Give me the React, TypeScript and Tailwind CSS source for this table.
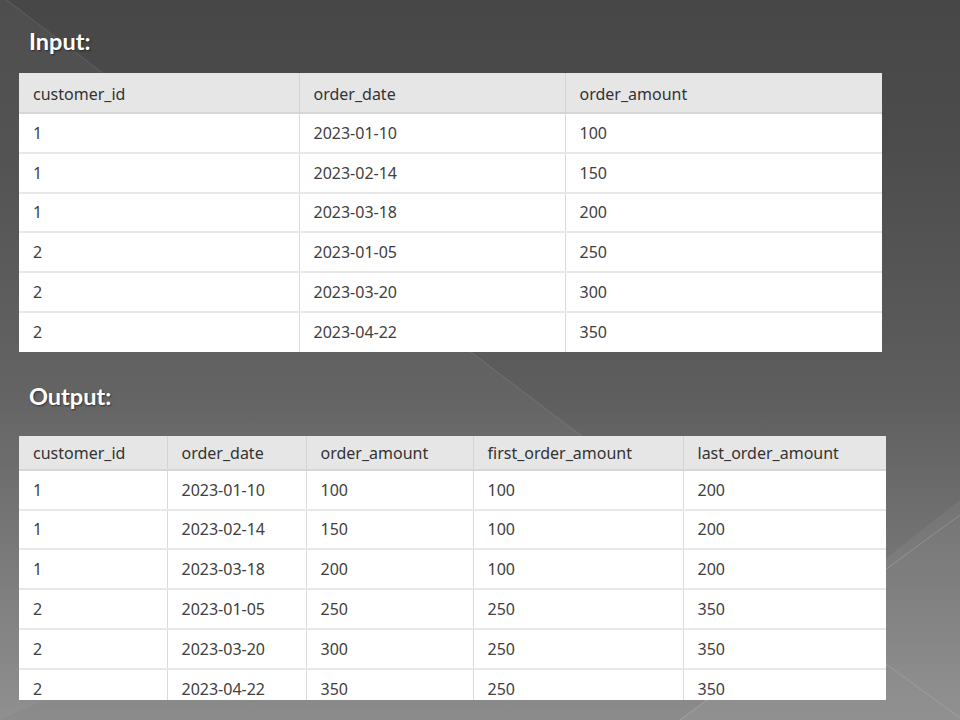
import * as React from "react";

const inputRows = [
  ["1", "2023-01-10", "100"],
  ["1", "2023-02-14", "150"],
  ["1", "2023-03-18", "200"],
  ["2", "2023-01-05", "250"],
  ["2", "2023-03-20", "300"],
  ["2", "2023-04-22", "350"],
];

const outputRows = [
  ["1", "2023-01-10", "100", "100", "200"],
  ["1", "2023-02-14", "150", "100", "200"],
  ["1", "2023-03-18", "200", "100", "200"],
  ["2", "2023-01-05", "250", "250", "350"],
  ["2", "2023-03-20", "300", "250", "350"],
  ["2", "2023-04-22", "350", "250", "350"],
];

function Backdrop() {
  // slide theme decoration: faint diagonal panels and lines
  return (
    <svg className="pointer-events-none absolute inset-0" width="960" height="720" viewBox="0 0 960 720">
      <polygon points="0,-5 600,450 0,720" fill="#ffffff" fillOpacity="0.04" />
      <polygon points="960,500 680,720 960,720" fill="#ffffff" fillOpacity="0.05" />
      <line x1="0" y1="-5" x2="600" y2="450" stroke="#ffffff" strokeOpacity="0.12" strokeWidth="1" />
      <line x1="680" y1="720" x2="960" y2="515" stroke="#ffffff" strokeOpacity="0.18" strokeWidth="1" />
      <line x1="860" y1="645" x2="960" y2="718" stroke="#ffffff" strokeOpacity="0.15" strokeWidth="1" />
    </svg>
  );
}

function Table({
  headers,
  rows,
  widths,
  headHeight,
}: {
  headers: string[];
  rows: string[][];
  widths: number[];
  headHeight: string;
}) {
  return (
    <table className="table-fixed border-collapse bg-white text-[16px] text-[#404040] font-['Noto_Sans','Open_Sans',sans-serif]">
      <colgroup>
        {widths.map((w, i) => (
          <col key={i} style={{ width: w }} />
        ))}
      </colgroup>
      <thead>
        <tr className={`${headHeight} bg-[#e6e6e6]`}>
          {headers.map((h, i) => (
            <th
              key={h}
              className={`border-b-2 border-[#d6d6d6] px-[14px] pt-[2px] text-left font-normal text-[#333] ${i > 0 ? "border-l border-l-[#d4d4d4]" : ""}`}
            >
              {h}
            </th>
          ))}
        </tr>
      </thead>
      <tbody>
        {rows.map((r, ri) => (
          <tr key={ri} className="h-[39.8px]">
            {r.map((c, ci) => (
              <td
                key={ci}
                className={`px-[14px] ${ri < rows.length - 1 ? "border-b-2 border-[#e8e8e8]" : ""} ${ci > 0 ? "border-l border-l-[#dadada]" : ""}`}
              >
                {c}
              </td>
            ))}
          </tr>
        ))}
      </tbody>
    </table>
  );
}

export default function App() {
  return (
    <div className="relative h-[720px] w-[960px] overflow-hidden bg-[linear-gradient(180deg,#474747_0%,#4c4c4c_20%,#5e5e5e_55%,#8c8c8c_100%)]">
      <Backdrop />
      <div className="relative flex flex-col pl-[19px]">
        <h1 className="ml-[10px] mt-[27px] h-[28px] text-[23.5px] font-bold leading-[28px] text-white font-['Lato','DejaVu_Sans',sans-serif] [text-shadow:1px_1px_2px_rgba(0,0,0,0.5)]">
          Input:
        </h1>
        <div className="mt-[18px]">
          <Table
            headers={["customer_id", "order_date", "order_amount"]}
            rows={inputRows}
            widths={[280, 266, 317]}
            headHeight="h-[40px]"
          />
        </div>
        <h1 className="ml-[10px] mt-[30px] h-[28px] text-[23.5px] font-bold leading-[28px] text-white font-['Lato','DejaVu_Sans',sans-serif] [text-shadow:1px_1px_2px_rgba(0,0,0,0.5)]">
          Output:
        </h1>
        <div className="mt-[26px] h-[264px] overflow-hidden">
          <Table
            headers={["customer_id", "order_date", "order_amount", "first_order_amount", "last_order_amount"]}
            rows={outputRows}
            widths={[148, 139, 167, 210, 203]}
            headHeight="h-[34px]"
          />
        </div>
      </div>
    </div>
  );
}
